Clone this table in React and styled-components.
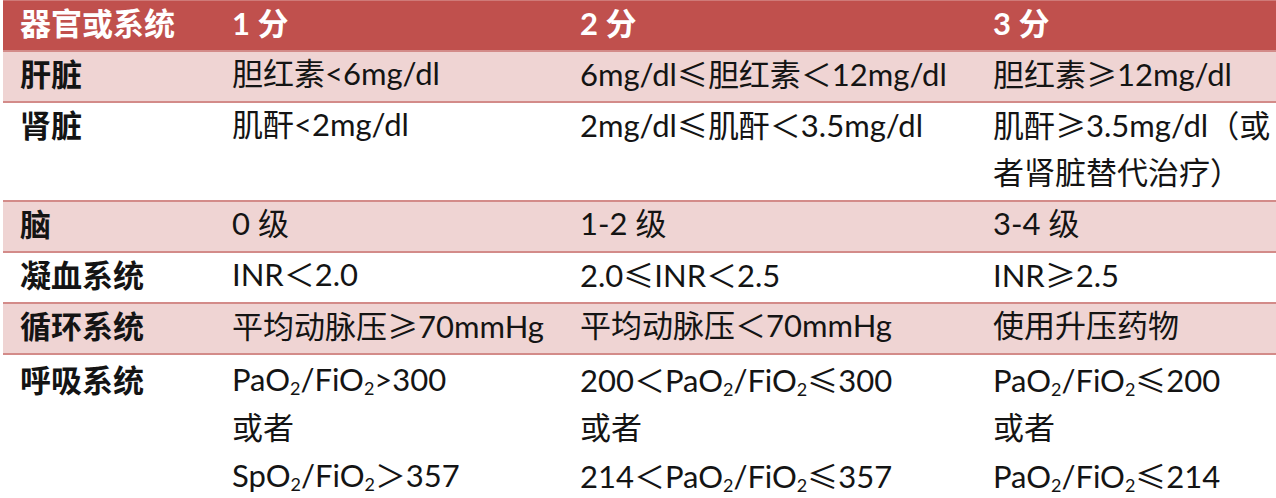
import { createGlobalStyle, styled } from 'styled-components';

const GlobalStyle = createGlobalStyle`
  html, body {
    margin: 0;
    padding: 0;
    background: #ffffff;
    overflow: hidden;
  }
`;

const Page = styled.div`
  padding-left: 3px;
  width: 1273px;
`;

const Table = styled.table`
  width: 1273px;
  border-collapse: collapse;
  table-layout: fixed;
  font-family: Lato, 'Noto Sans CJK SC', sans-serif;
  font-size: 31px;
  color: #141414;
`;

const HeadRow = styled.tr`
  background: #c0504d;
  border-top: 1px solid #cf7a78;
`;

const Th = styled.th`
  padding: 0 0 4px 17px;
  text-align: left;
  vertical-align: top;
  font-weight: 700;
  color: #ffffff;
  line-height: 45px;
  white-space: nowrap;
`;

const Row = styled.tr`
  background: ${({ $shaded }) => ($shaded ? '#efd4d3' : '#ffffff')};
  border-top: 2px solid #d38b89;
`;

const Td = styled.td`
  padding: ${({ $top }) => $top || 1}px 0 0 17px;
  vertical-align: top;
  font-weight: ${({ $label }) => ($label ? 700 : 400)};
  white-space: nowrap;
  font-family: ${({ $label }) =>
    $label ? "'Noto Sans CJK SC', sans-serif" : "Lato, 'Noto Sans CJK SC', sans-serif"};
`;

const Line = styled.div`
  height: 48px;
  line-height: 40px;
`;

const Sym = styled.span`
  font-family: 'Noto Sans CJK SC', sans-serif;
`;

const Sub = styled.sub`
  font-size: 0.58em;
  line-height: 0;
  vertical-align: -0.24em;
`;

const cols = [212, 348, 413, 300];

function Le() {
  return <Sym>≤</Sym>;
}
function Ge() {
  return <Sym>≥</Sym>;
}
function PaFi({ sp }) {
  return (
    <>
      {sp ? 'Sp' : 'Pa'}O<Sub>2</Sub>/FiO<Sub>2</Sub>
    </>
  );
}

const rows = [
  {
    label: '肝脏',
    shaded: true,
    cells: [
      ['胆红素<6mg/dl'],
      [<>6mg/dl<Le />胆红素＜12mg/dl</>],
      [<>胆红素<Ge />12mg/dl</>],
    ],
  },
  {
    label: '肾脏',
    cells: [
      ['肌酐<2mg/dl'],
      [<>2mg/dl<Le />肌酐＜3.5mg/dl</>],
      [<>肌酐<Ge />3.5mg/dl（或</>, '者肾脏替代治疗）'],
    ],
  },
  {
    label: '脑',
    shaded: true,
    cells: [['0 级'], ['1-2 级'], ['3-4 级']],
  },
  {
    label: '凝血系统',
    cells: [['INR＜2.0'], [<>2.0<Le />INR＜2.5</>], [<>INR<Ge />2.5</>]],
  },
  {
    label: '循环系统',
    shaded: true,
    cells: [
      [<>平均动脉压<Ge />70mmHg</>],
      ['平均动脉压＜70mmHg'],
      ['使用升压药物'],
    ],
  },
  {
    label: '呼吸系统',
    top: 4,
    cells: [
      [<><PaFi />&gt;300</>, '或者', <><PaFi sp />＞357</>],
      [<>200＜<PaFi /><Le />300</>, '或者', <>214＜<PaFi /><Le />357</>],
      [<><PaFi /><Le />200</>, '或者', <><PaFi /><Le />214</>],
    ],
  },
];

export default function App() {
  return (
    <Page>
      <GlobalStyle />
      <Table>
        <colgroup>
          {cols.map((w, i) => (
            <col key={i} style={{ width: w }} />
          ))}
        </colgroup>
        <thead>
          <HeadRow>
            <Th>器官或系统</Th>
            <Th>1 分</Th>
            <Th>2 分</Th>
            <Th>3 分</Th>
          </HeadRow>
        </thead>
        <tbody>
          {rows.map((row) => (
            <Row key={row.label} $shaded={row.shaded}>
              <Td $label $top={row.top}>
                <Line>{row.label}</Line>
              </Td>
              {row.cells.map((lines, i) => (
                <Td key={i} $top={row.top}>
                  {lines.map((ln, j) => (
                    <Line key={j}>{ln}</Line>
                  ))}
                </Td>
              ))}
            </Row>
          ))}
        </tbody>
      </Table>
    </Page>
  );
}
